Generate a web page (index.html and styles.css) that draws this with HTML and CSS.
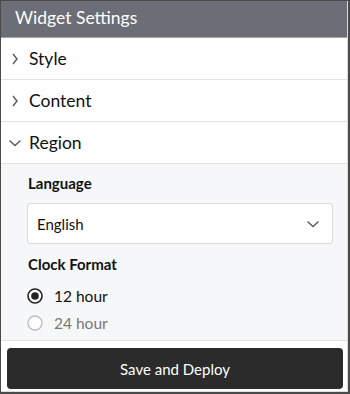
FILE: index.html
```html
<!DOCTYPE html>
<html>
<head>
<meta charset="utf-8">
<link rel="stylesheet" href="styles.css">
</head>
<body>
<div class="frame">
  <div class="inner">
    <div class="header">Widget Settings</div>
    <div class="row">
      <svg class="chev-r" width="8" height="12" viewBox="0 0 8 12"><path d="M2 1 L6 6 L2 11" fill="none" stroke="#555" stroke-width="1.3"/></svg>
      <span>Style</span>
    </div>
    <div class="row">
      <svg class="chev-r" width="8" height="12" viewBox="0 0 8 12"><path d="M2 1 L6 6 L2 11" fill="none" stroke="#555" stroke-width="1.3"/></svg>
      <span>Content</span>
    </div>
    <div class="row open">
      <svg class="chev-d" width="14" height="8" viewBox="0 0 14 8"><path d="M1.5 1.5 L7 6.5 L12.5 1.5" fill="none" stroke="#555" stroke-width="1.3"/></svg>
      <span>Region</span>
    </div>
    <div class="panel">
      <div class="label">Language</div>
      <div class="select">
        <span>English</span>
        <svg width="14" height="8" viewBox="0 0 14 8"><path d="M1.5 1.5 L7 6.5 L12.5 1.5" fill="none" stroke="#555" stroke-width="1.3"/></svg>
      </div>
      <div class="label label2">Clock Format</div>
      <div class="radio">
        <svg width="16" height="16" viewBox="0 0 16 16"><circle cx="8" cy="8" r="7" fill="#fff" stroke="#222" stroke-width="1.6"/><circle cx="8" cy="8" r="3.8" fill="#222"/></svg>
        <span>12 hour</span>
      </div>
      <div class="radio disabled">
        <svg width="16" height="16" viewBox="0 0 16 16"><circle cx="8" cy="8" r="7" fill="#fff" stroke="#bdbdbd" stroke-width="1.3"/></svg>
        <span>24 hour</span>
      </div>
    </div>
    <div class="footer">
      <div class="btn">Save and Deploy</div>
    </div>
  </div>
</div>
</body>
</html>
```
FILE: styles.css
```css
html, body {
  margin: 0;
  padding: 0;
  background: #fff;
}
body {
  font-family: Lato, "Noto Sans", sans-serif;
  color: #111;
}
.frame {
  width: 350px;
  height: 394px;
  box-sizing: border-box;
  border-top: 1px solid #4a4a4a;
  border-left: 1px solid #4a4a4a;
  border-right: 2px solid #4a4a4a;
  border-bottom: 2px solid #4a4a4a;
  overflow: hidden;
}
.inner {
  height: 100%;
  box-sizing: border-box;
  border-right: 1px solid #dcdcdc;
  border-bottom: 1px solid #dcdcdc;
  display: flex;
  flex-direction: column;
}
.header {
  height: 36px;
  background: #6b6e77;
  border-bottom: 1px solid #a3a5ab;
  color: #fff;
  font-size: 17.5px;
  line-height: 33px;
  padding-left: 14px;
}
.row {
  height: 41px;
  border-bottom: 1px solid #e1e2e4;
  display: flex;
  align-items: center;
  font-size: 17.5px;
}
.chev-r {
  margin-left: 10px;
  margin-right: 10px;
}
.chev-d {
  margin-left: 7px;
  margin-right: 7px;
}
.panel {
  background: #f6f7f9;
  border-bottom: 1px solid #e1e2e4;
  padding: 9px 14px 6px 26px;
}
.label {
  font-weight: 700;
  font-size: 15px;
  line-height: 20px;
  padding-left: 1px;
}
.select {
  margin-top: 10px;
  height: 41px;
  box-sizing: border-box;
  background: #fff;
  border: 1px solid #dcdcdc;
  border-radius: 3px;
  display: flex;
  align-items: center;
  justify-content: space-between;
  padding: 0 12px 0 9px;
  font-size: 15px;
}
.label2 {
  margin-top: 10px;
}
.radio {
  height: 22px;
  display: flex;
  align-items: center;
  font-size: 15.5px;
  margin-top: 11px;
}
.radio + .radio {
  margin-top: 5px;
}
.radio svg {
  margin-right: 11px;
}
.radio.disabled {
  color: #777;
}
.footer {
  flex: 1;
  padding: 7px 4px 0 6px;
}
.btn {
  height: 41px;
  background: #2b2b2b;
  border-radius: 4px;
  color: #fff;
  font-size: 15px;
  display: flex;
  align-items: center;
  justify-content: center;
}
```
